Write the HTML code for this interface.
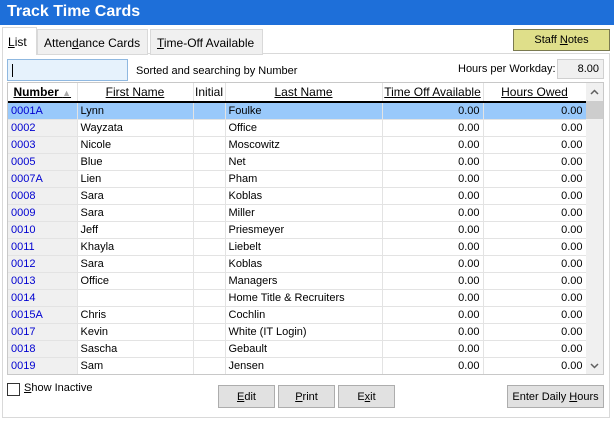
<!DOCTYPE html>
<html><head><style>
*{box-sizing:border-box;margin:0;padding:0}
body{width:614px;height:421px;background:#fff;font-family:"Liberation Sans",sans-serif;font-size:12px;color:#000;position:relative;overflow:hidden}
.a{position:absolute}
.title{left:0;top:0;width:614px;height:25px;background:#1e6fd9;color:#fff;font-weight:bold;font-size:16px;padding:3px 0 0 7px}
.tab{height:26px;border:1px solid #d9d9d9;background:#f0f0f0;padding:6px 0 0 6px;font-size:12px}
.btn{border:1px solid #adadad;background:#e1e1e1;text-align:center;font-size:11px;padding-top:5px}
table{border-collapse:collapse;table-layout:fixed}
td{height:17px;border-right:1px solid #e3e3e3;border-bottom:1px solid #e3e3e3;padding:0 3px;white-space:nowrap;overflow:hidden;font-size:11px}
td.n{background:#f0f0f0;color:#0000d0}
td.r{text-align:right}
tr.s td{background:#99c9fb}
th{height:19px;font-weight:normal;text-decoration:underline;border-right:1px solid #e3e3e3;border-bottom:2px solid #000;font-size:12px}
</style></head><body>
<div class="a title">Track Time Cards</div>
<div class="a" style="left:2px;top:53px;width:608px;height:365px;border:1px solid #d9d9d9"></div>
<div class="a" style="left:2px;top:27px;width:35px;height:28px;border:1px solid #d9d9d9;border-bottom:none;background:#fff;padding:7px 0 0 5px;font-size:12px"><u>L</u>ist</div>
<div class="a tab" style="left:37px;top:29px;width:111px">Atten<u>d</u>ance Cards</div>
<div class="a tab" style="left:150px;top:29px;width:113px"><u>T</u>ime-Off Available</div>
<div class="a btn" style="left:513px;top:29px;width:97px;height:22px;background:#dfdf8a;border-color:#7a7a50;padding-top:4px"><span>Staff <u>N</u>otes</span></div>
<div class="a" style="left:7px;top:59px;width:121px;height:22px;background:#e6f2fc;border:1px solid #8fb8e0"><div style="position:absolute;left:4px;top:4px;width:1px;height:13px;background:#000"></div></div>
<div class="a" style="left:136px;top:65px;font-size:11px">Sorted and searching by Number</div>
<div class="a" style="left:458px;top:63px;font-size:11px">Hours per Workday:</div>
<div class="a" style="left:557px;top:59px;width:47px;height:20px;background:#f0f0f0;border:1px solid #d0d0d0;text-align:right;padding:3px 4px 0 0;font-size:11px">8.00</div>
<div class="a" style="left:7px;top:82px;width:597px;height:293px;border:1px solid #c8c8c8;overflow:hidden">
<table style="width:578px">
<colgroup><col style="width:69px"><col style="width:116px"><col style="width:32px"><col style="width:157px"><col style="width:101px"><col style="width:103px"></colgroup>
<tr><th style="font-weight:bold">Number <span style="color:#aaa;text-decoration:none;font-size:9px">&#9650;</span></th><th>First Name</th><th style="text-decoration:none">Initial</th><th>Last Name</th><th>Time Off Available</th><th>Hours Owed</th></tr>
<tr class="s"><td class="n">0001A</td><td>Lynn</td><td></td><td>Foulke</td><td class="r">0.00</td><td class="r">0.00</td></tr>
<tr><td class="n">0002</td><td>Wayzata</td><td></td><td>Office</td><td class="r">0.00</td><td class="r">0.00</td></tr>
<tr><td class="n">0003</td><td>Nicole</td><td></td><td>Moscowitz</td><td class="r">0.00</td><td class="r">0.00</td></tr>
<tr><td class="n">0005</td><td>Blue</td><td></td><td>Net</td><td class="r">0.00</td><td class="r">0.00</td></tr>
<tr><td class="n">0007A</td><td>Lien</td><td></td><td>Pham</td><td class="r">0.00</td><td class="r">0.00</td></tr>
<tr><td class="n">0008</td><td>Sara</td><td></td><td>Koblas</td><td class="r">0.00</td><td class="r">0.00</td></tr>
<tr><td class="n">0009</td><td>Sara</td><td></td><td>Miller</td><td class="r">0.00</td><td class="r">0.00</td></tr>
<tr><td class="n">0010</td><td>Jeff</td><td></td><td>Priesmeyer</td><td class="r">0.00</td><td class="r">0.00</td></tr>
<tr><td class="n">0011</td><td>Khayla</td><td></td><td>Liebelt</td><td class="r">0.00</td><td class="r">0.00</td></tr>
<tr><td class="n">0012</td><td>Sara</td><td></td><td>Koblas</td><td class="r">0.00</td><td class="r">0.00</td></tr>
<tr><td class="n">0013</td><td>Office</td><td></td><td>Managers</td><td class="r">0.00</td><td class="r">0.00</td></tr>
<tr><td class="n">0014</td><td></td><td></td><td>Home Title &amp; Recruiters</td><td class="r">0.00</td><td class="r">0.00</td></tr>
<tr><td class="n">0015A</td><td>Chris</td><td></td><td>Cochlin</td><td class="r">0.00</td><td class="r">0.00</td></tr>
<tr><td class="n">0017</td><td>Kevin</td><td></td><td>White (IT Login)</td><td class="r">0.00</td><td class="r">0.00</td></tr>
<tr><td class="n">0018</td><td>Sascha</td><td></td><td>Gebault</td><td class="r">0.00</td><td class="r">0.00</td></tr>
<tr><td class="n">0019</td><td>Sam</td><td></td><td>Jensen</td><td class="r">0.00</td><td class="r">0.00</td></tr>
</table>
<div class="a" style="left:578px;top:0;width:17px;height:291px;background:#f0f0f0">
<svg class="a" style="left:4px;top:6px" width="9" height="6"><path d="M1 5L4.5 1.5L8 5" stroke="#606060" stroke-width="1.5" fill="none"/></svg>
<div class="a" style="left:0;top:18px;width:17px;height:18px;background:#cdcdcd"></div>
<svg class="a" style="left:4px;top:280px" width="9" height="6"><path d="M1 1L4.5 4.5L8 1" stroke="#606060" stroke-width="1.5" fill="none"/></svg>
</div>
</div>
<div class="a" style="left:7px;top:383px;width:13px;height:13px;border:1px solid #333;background:#fff"></div>
<div class="a" style="left:24px;top:382px;font-size:11px"><u>S</u>how Inactive</div>
<div class="a btn" style="left:218px;top:385px;width:57px;height:23px"><u>E</u>dit</div>
<div class="a btn" style="left:278px;top:385px;width:57px;height:23px"><u>P</u>rint</div>
<div class="a btn" style="left:338px;top:385px;width:57px;height:23px">E<u>x</u>it</div>
<div class="a btn" style="left:507px;top:385px;width:97px;height:23px">Enter Daily <u>H</u>ours</div>
</body></html>
